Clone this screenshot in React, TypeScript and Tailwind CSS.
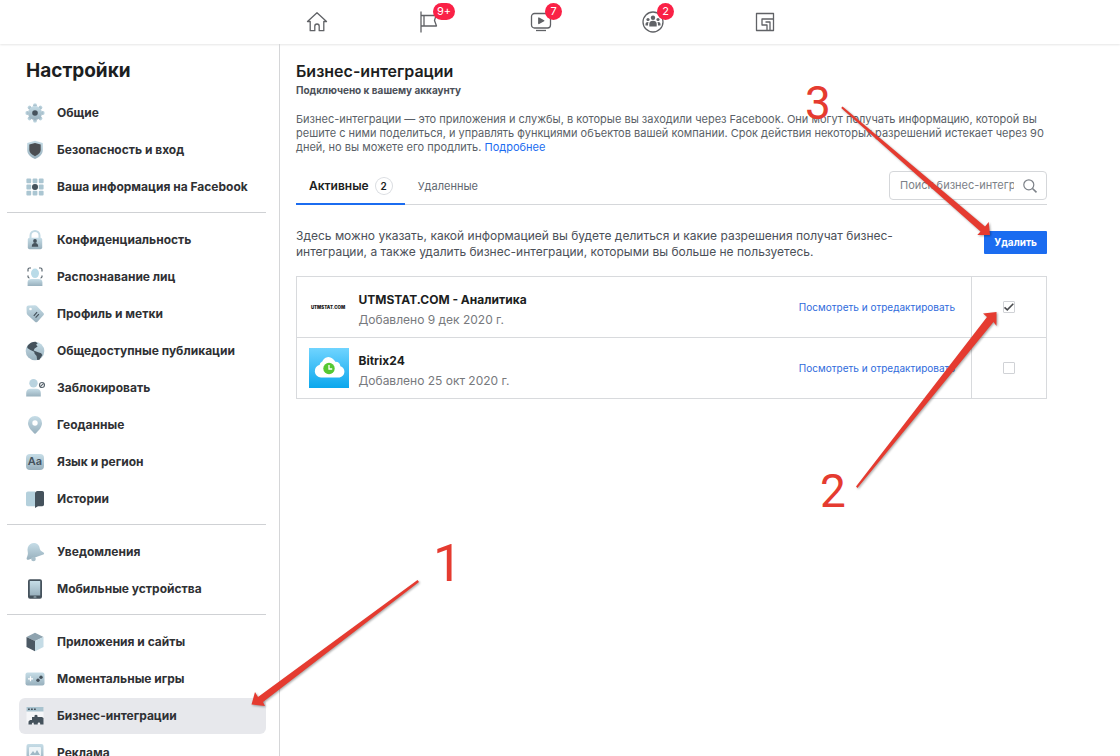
import { useState, type ReactNode } from "react";
import clsx from "clsx";

interface NavItem {
  label: string;
  icon: ReactNode;
  active?: boolean;
}

interface Integration {
  id: string;
  name: string;
  added: string;
  logo: ReactNode;
}

const SHADE = "url(#shade)";
const DARK = "#45525c";

function Glyph({ children }: { children: ReactNode }) {
  return (
    <svg width="20" height="20" viewBox="0 0 20 20" className="shrink-0" aria-hidden="true">
      {children}
    </svg>
  );
}

const GearIcon = (
  <Glyph>
    {[0, 45, 90, 135, 180, 225, 270, 315].map((a) => (
      <circle key={a} cx="10" cy="2.200" r="1.900" fill={SHADE} transform={`rotate(${a} 10 10)`} />
    ))}
    <circle cx="10" cy="10" r="7" fill={SHADE} />
    <circle cx="10" cy="10" r="2.800" fill={DARK} />
  </Glyph>
);

const ShieldIcon = (
  <Glyph>
    <path d="M10 .8 17.800 3v7c0 4.400-3.500 7.400-7.800 9-4.300-1.600-7.800-4.600-7.800-9V3z" fill={SHADE} />
    <path d="M10 3l5.700 1.600v5.200c0 3-2.600 5-5.700 6.400-3.100-1.400-5.700-3.400-5.700-6.400V4.600z" fill="#4b4e52" />
  </Glyph>
);

const GridIcon = (
  <Glyph>
    {[1.4, 7.6, 13.8].map((x) =>
      [1.4, 7.6, 13.8].map((y) => (
        <rect key={`${x}-${y}`} x={x} y={y} width="4.800" height="4.800" rx="1" fill="#abc6d2" />
      )),
    )}
    <circle cx="10" cy="10" r="3" fill={DARK} />
  </Glyph>
);

const LockIcon = (
  <Glyph>
    <path d="M5.500 9V5.500a4.500 4.500 0 0 1 9 0V9" fill="none" stroke="#c3dae4" strokeWidth="2" />
    <rect x="2.800" y="7.800" width="14.400" height="11.400" rx="1.800" fill={SHADE} />
    <circle cx="10" cy="11" r="1.900" fill={DARK} />
    <path d="M6.800 16.800c0-2.600 1-3.700 3.200-3.700s3.200 1.100 3.200 3.700z" fill={DARK} />
  </Glyph>
);

const FaceIcon = (
  <Glyph>
    <path d="M3 4.500V2.500C3 1.700 3.600 1 4.500 1H6M14 1h1.500c.9 0 1.500.7 1.500 1.500v2M3 8.500v1c0 .9.600 1.500 1.500 1.500M17 8.500v1c0 .9-.6 1.500-1.500 1.500" fill="none" stroke="#59656e" strokeWidth="1.200" />
    <ellipse cx="10" cy="6.300" rx="4" ry="4.800" fill="#b9dbe8" />
    <path d="M2.600 19v-3.500c0-2.600 1.600-3.500 4-3.500h6.800c2.400 0 4 .9 4 3.500V19z" fill={SHADE} />
  </Glyph>
);

const TagIcon = (
  <Glyph>
    <path d="M1.500 3.500c0-1.200.9-2 2-2L10 1.200c.8 0 1.300.2 1.800.7l6.600 7c.7.800.7 1.700 0 2.400l-5.900 6.400c-.7.8-1.800.8-2.500 0L2.600 11c-.6-.6-.9-1.200-.9-2z" fill={SHADE} />
    <circle cx="5.500" cy="5" r="1.300" fill="#fff" />
    <path d="M8.800 11.800l3.300-3.600M10.600 13.700l3.300-3.600" stroke={DARK} strokeWidth="1.200" />
  </Glyph>
);

const GlobeIcon = (
  <Glyph>
    <circle cx="10" cy="10" r="9.300" fill={SHADE} />
    <path d="M2.400 5C4.400 2.200 7 .9 10.500.8l2.200 1.500-1.600 1.500 1.500 1.700-3 2-.9 2 2.500 1 1.200.6 3.700 1.100 1.200 1.900-2.800 4.700-2.300.3-.6-4-2-2.300-.4-2L5.400 9 2.300 7z" fill={DARK} />
  </Glyph>
);

const BlockIcon = (
  <Glyph>
    <circle cx="8.500" cy="5.300" r="4.200" fill="#b9d3df" />
    <path d="M1.200 18.500V15c0-3 2-4.300 4.300-4.300h6c2.300 0 4.300 1.300 4.300 4.300v3.500z" fill={SHADE} />
    <circle cx="17" cy="7" r="2.500" fill="none" stroke="#59656e" strokeWidth="1.200" />
    <path d="M18.700 5.300l-3.400 3.400" stroke="#59656e" strokeWidth="1.100" />
  </Glyph>
);

const PinIcon = (
  <Glyph>
    <path d="M10 19C6 15.500 3 11.900 3 8a7 7 0 0 1 14 0c0 3.900-3 7.500-7 11z" fill={SHADE} />
    <circle cx="10" cy="8" r="2.700" fill="#fff" />
  </Glyph>
);

const LanguageIcon = (
  <Glyph>
    <rect x="1" y="2" width="18" height="16" rx="4" fill={SHADE} />
    <text x="10" y="13" textAnchor="middle" fontSize="11" fontWeight="600" fill={DARK}>
      Aa
    </text>
  </Glyph>
);

const BookIcon = (
  <Glyph>
    <path d="M10 2.500H3C1.800 2.500 1 3.300 1 4.500v11c0 1 .7 1.700 1.800 1.700H10z" fill="#b4d0dc" />
    <path d="M10 19V4.500C10 3 11 2 12.500 2h4.700c1.100 0 1.800.7 1.800 1.800v11.700c0 1-.7 1.700-1.800 1.700H13L10 19z" fill={DARK} />
  </Glyph>
);

const BellIcon = (
  <Glyph>
    <path d="M2.800 5.500C3.600 2.500 7 .5 10 1.100c3.700.8 4.500 3.800 4.900 6 .4 1.800 2 2.500 3.600 3.300.9.500.8 1.700-.2 2.100L3.500 17.700c-1.200.4-2.200-.4-1.800-1.700.7-2.200 1.500-3.700 1.100-5.800-.4-1.700-.4-3.200 0-4.700z" fill={SHADE} />
    <circle cx="8.500" cy="17" r="2.300" fill="#a9bfca" />
  </Glyph>
);

const PhoneIcon = (
  <Glyph>
    <rect x="3" y=".3" width="14" height="19.400" rx="2" fill={DARK} />
    <rect x="4.800" y="2" width="10.400" height="14.500" fill={SHADE} />
    <rect x="8.500" y="17.400" width="3" height="1.200" rx=".5" fill="#a9bfca" />
  </Glyph>
);

const CubeIcon = (
  <Glyph>
    <path d="M10 .8 18.500 5 10 9 1.500 5z" fill="#8ea3af" />
    <path d="M1.500 5 10 9v10.200L1.500 15z" fill="#4b5964" />
    <path d="M18.500 5 10 9v10.200l8.500-4.200z" fill="#c5dce6" />
  </Glyph>
);

const GamepadIcon = (
  <Glyph>
    <rect x=".5" y="3.500" width="19" height="13" rx="2" fill={SHADE} />
    <path d="M5.500 7.300v5M3 9.800h5" stroke="#fff" strokeWidth="1.200" />
    <circle cx="16" cy="8.300" r="1.700" fill={DARK} />
    <circle cx="13" cy="11.300" r="1.700" fill={DARK} />
  </Glyph>
);

const PuzzleIcon = (
  <Glyph>
    <rect x="1.500" y="1" width="17" height="16.500" rx="1" fill="#f5f6f8" />
    <rect x="1.500" y="1" width="17" height="4.500" fill="#a9c3cf" />
    <path d="M3 3.200h1.800M6 3.200h1.800M9 3.200h1.800" stroke={DARK} strokeWidth="1.600" />
    <path d="M7 11h2.500c-.8-3 3.800-3 3 0H17l1.500 1v6.500h-3.300c.4-2.600-2.900-2.600-2.500 0H9l-.6-2c-1.200.2-1.600.8-1.500 2H3.500v-2.800c.3-1.300 1.700-1.900 3.500-1.700z" fill={DARK} />
  </Glyph>
);

const AdsIcon = (
  <Glyph>
    <rect x="1.500" y="1" width="17" height="18" rx="2" fill={SHADE} />
    <rect x="4" y="4" width="12" height="9" rx="1" fill="#eef5f8" />
    <path d="M5 12l3-4 2 2.500L12 7l3 5z" fill="#9fb9c6" />
  </Glyph>
);

const navGroups: NavItem[][] = [
  [
    { label: "Общие", icon: GearIcon },
    { label: "Безопасность и вход", icon: ShieldIcon },
    { label: "Ваша информация на Facebook", icon: GridIcon },
  ],
  [
    { label: "Конфиденциальность", icon: LockIcon },
    { label: "Распознавание лиц", icon: FaceIcon },
    { label: "Профиль и метки", icon: TagIcon },
    { label: "Общедоступные публикации", icon: GlobeIcon },
    { label: "Заблокировать", icon: BlockIcon },
    { label: "Геоданные", icon: PinIcon },
    { label: "Язык и регион", icon: LanguageIcon },
    { label: "Истории", icon: BookIcon },
  ],
  [
    { label: "Уведомления", icon: BellIcon },
    { label: "Мобильные устройства", icon: PhoneIcon },
  ],
  [
    { label: "Приложения и сайты", icon: CubeIcon },
    { label: "Моментальные игры", icon: GamepadIcon },
    { label: "Бизнес-интеграции", icon: PuzzleIcon, active: true },
    { label: "Реклама", icon: AdsIcon },
  ],
];

const integrations: Integration[] = [
  {
    id: "utmstat",
    name: "UTMSTAT.COM - Аналитика",
    added: "Добавлено 9 дек 2020 г.",
    logo: (
      <svg width="40" height="40" viewBox="0 0 40 40" aria-hidden="true">
        <text x="19" y="22" textAnchor="middle" fontSize="4.400" fontWeight="900" fill="#222">
          UTMSTAT.COM
        </text>
      </svg>
    ),
  },
  {
    id: "bitrix24",
    name: "Bitrix24",
    added: "Добавлено 25 окт 2020 г.",
    logo: <BitrixLogo />,
  },
];

function BitrixLogo() {
  return (
    <svg width="40" height="40" viewBox="0 0 40 40" aria-hidden="true">
      <defs>
        <linearGradient id="sky" x1="0" y1="0" x2="0" y2="1">
          <stop offset="0" stopColor="#70d4ff" />
          <stop offset="1" stopColor="#0ba7ed" />
        </linearGradient>
      </defs>
      <rect width="40" height="40" fill="url(#sky)" />
      <path d="M12 29.500a6.500 6.500 0 0 1-1.300-12.800c.4-1.700 1.300-3 2.600-3.300a6.600 6.600 0 0 1 11-2.200c1 .9 1.500 1.500 1.900 2.500 3.200-.2 5 1.800 5.200 4.600 2.500.8 4 2.700 4 5.200 0 3.500-2.500 6-6 6z" fill="#fff" />
      <circle cx="20" cy="20.500" r="5.700" fill="#56c833" />
      <path d="M20 17v4h3.200" fill="none" stroke="#fff" strokeWidth="1.300" />
    </svg>
  );
}

function Badge({ children }: { children: ReactNode }) {
  return (
    <span className="absolute -top-2 left-[15px] flex h-[17px] min-w-[17px] items-center justify-center rounded-full bg-[#fa2146] px-1 text-[11px] text-white">
      {children}
    </span>
  );
}

const topTabs = [
  {
    title: "Главная",
    icon: <path d="M1.500 10.500 11 1.800l9.500 8.700h-2.700v9.200h-4.600v-4.500a2.200 2.200 0 0 0-4.400 0v4.500H4.200v-9.200z" />,
  },
  {
    title: "Страницы",
    badge: "9+",
    icon: <path d="M3 .5v21M6 4v11M3 4.500h15l-1.500 5 2 5.500H3" />,
  },
  {
    title: "Видео",
    badge: "7",
    icon: (
      <>
        <rect x="1.500" y="2.500" width="19" height="14.500" rx="3" />
        <path d="M8.800 7v5.500l5-2.750z" fill="currentColor" />
        <path d="M6 19.500h10" />
      </>
    ),
  },
  {
    title: "Группы",
    badge: "2",
    icon: (
      <>
        <circle cx="11" cy="11" r="10" />
        <g fill="currentColor" stroke="none">
          <circle cx="11" cy="6.700" r="2.200" />
          <circle cx="6" cy="8.500" r="1.600" />
          <circle cx="16" cy="8.500" r="1.600" />
          <path d="M7.300 15.500v-2.700c0-2 1.500-3 3.700-3s3.700 1 3.700 3v2.700zM3.500 14.500v-1.300c0-1.500 1.200-2.400 3-2.200-.4.800-.5 2-.5 3.500zM18.500 14.500v-1.300c0-1.500-1.200-2.400-3-2.200.4.800.5 2 .5 3.500z" />
        </g>
      </>
    ),
  },
  {
    title: "Игры",
    icon: <path d="M2.500 2.500h17v17h-17zM19.500 8H8v6h5v5.500M16 19.500V11h-4.500" />,
  },
];

function TopBar() {
  return (
    <header className="flex h-11 shrink-0 justify-start pl-[261px] shadow-[0_1px_2px_rgba(0,0,0,0.1)]">
      <nav className="flex">
        {topTabs.map((tab) => (
          <a key={tab.title} href="#" title={tab.title} className="flex w-28 items-center justify-center">
            <span className="relative text-[#606266]">
              <svg width="22" height="22" viewBox="0 0 22 22" fill="none" stroke="currentColor" strokeWidth="1.300" strokeLinejoin="round">
                {tab.icon}
              </svg>
              {tab.badge && <Badge>{tab.badge}</Badge>}
            </span>
          </a>
        ))}
      </nav>
    </header>
  );
}

function Sidebar() {
  return (
    <aside className="w-[280px] shrink-0 overflow-hidden border-r border-[#d5d6d8] pt-3 pr-[13px]">
      <svg width="0" height="0" className="absolute" aria-hidden="true">
        <defs>
          <linearGradient id="shade" x1="0" y1="0" x2="0" y2="1">
            <stop offset="0" stopColor="#c6dde7" />
            <stop offset="1" stopColor="#98b0bd" />
          </linearGradient>
        </defs>
      </svg>
      <h1 className="pt-px pb-2.5 pl-[26px] text-[19px] leading-7 font-bold text-[#1c1e21]">Настройки</h1>
      {navGroups.map((group, i) => (
        <div key={i}>
          {i > 0 && <hr className="mt-1.5 mb-[9px] ml-[7px] border-[#cfd1d4]" />}
          <ul className="ml-[19px]">
            {group.map((item) => (
              <li key={item.label} className="pb-px">
                <a
                  href="#"
                  className={clsx(
                    "flex h-9 items-center gap-3 rounded-md pl-1.5 text-[12px] font-bold whitespace-nowrap text-[#2f3134]",
                    item.active && "bg-[#e7e8ec]",
                  )}
                >
                  {item.icon}
                  {item.label}
                </a>
              </li>
            ))}
          </ul>
        </div>
      ))}
    </aside>
  );
}

function Toolbar() {
  return (
    <div className="mt-[11px] flex h-10 items-start justify-between border-b border-[#d5d7da]">
      <div className="flex h-10">
        <button className="flex items-center gap-[7px] border-b-2 border-[#1b6cf0] px-[13px] pt-1 text-[12px] font-semibold text-[#1c1e21]">
          Активные
          <span className="flex h-4 w-4 items-center justify-center rounded-full text-[10px] ring-1 ring-[#dadde1]">
            2
          </span>
        </button>
        <button className="border-b-2 border-transparent px-[13px] pt-1 text-[11px] text-[#606770]">Удаленные</button>
      </div>
      <label className="mt-1.5 flex h-[29px] w-[158px] items-center rounded-sm border border-[#d5d7da] pr-2 pl-2.5">
        <input
          type="text"
          aria-label="Поиск бизнес-интеграций"
          placeholder="Поиск бизнес-интеграций"
          className="w-[114px] text-[11px] outline-none placeholder:text-[#7c8188]"
        />
        <svg width="16" height="16" viewBox="0 0 16 16" fill="none" stroke="#7c8188" strokeWidth="1.200" className="ml-auto shrink-0" aria-hidden="true">
          <circle cx="6.800" cy="6.800" r="5" />
          <path d="M10.500 10.500l4 3.800" strokeWidth="1.600" />
        </svg>
      </label>
    </div>
  );
}

function IntegrationTable() {
  const [checked, setChecked] = useState<Record<string, boolean>>({ utmstat: true });

  return (
    <table className="mt-4 w-full border-collapse border border-[#d8dadd]">
      <tbody>
        {integrations.map((item) => (
          <tr key={item.id} className="h-[61px] border-b border-[#d8dadd]">
            <td className="w-[62px] pl-3">{item.logo}</td>
            <td className="pt-1.5">
              <div className="text-[12px] leading-5 font-bold text-[#1c1e21]">{item.name}</div>
              <div className="text-[12px] leading-5 text-[#77797d]">{item.added}</div>
            </td>
            <td className="pr-4 text-right text-[10px]">
              <a href="#" className="text-[#2f6bdc]">
                Посмотреть и отредактировать
              </a>
            </td>
            <td className="w-[75px] border-l border-[#d8dadd]">
              <label className="relative mx-auto block h-3 w-3">
                <input
                  type="checkbox"
                  aria-label={item.name}
                  checked={!!checked[item.id]}
                  onChange={(e) => setChecked({ ...checked, [item.id]: e.target.checked })}
                  className="block h-3 w-3 appearance-none rounded-[1px] border border-[#d0d2d6]"
                />
                {checked[item.id] && (
                  <svg width="12" height="12" viewBox="0 0 12 12" className="pointer-events-none absolute inset-0" aria-hidden="true">
                    <path d="M1.500 6.300l2.800 2.500 6-6" fill="none" stroke="#4b4d50" strokeWidth="1.600" />
                  </svg>
                )}
              </label>
            </td>
          </tr>
        ))}
      </tbody>
    </table>
  );
}

// Numbered arrows drawn over the page.
function Arrows() {
  return (
    <svg
      width="1120"
      height="756"
      viewBox="0 0 1120 756"
      className="pointer-events-none absolute top-0 left-0 drop-shadow-[1px_1px_1px_rgba(0,0,0,0.35)]"
      fill="#e53b30"
    >
      <path d="M251.500 704.500 255 692l3 5 159.500-117 1.500 2-156 120 2 4z" />
      <path d="M996.500 312 983 313.500l4 3.500-131 169.500 1.500 1.500L993.500 322l3 4z" />
      <path d="M990 235l-1.300-13-3.700 4.500L842.500 106.500l-1.300 1.500 139.300 123.500-3.200 3.500z" />
    </svg>
  );
}

function StepNumbers() {
  return (
    <div className="pointer-events-none font-[Roboto,sans-serif] leading-none text-[#e53b30]">
      <span className="absolute top-[538px] left-[433px] text-[52px]">1</span>
      <span className="absolute top-[468px] left-[820px] text-[46px]">2</span>
      <span className="absolute top-[80px] left-[805px] text-[46px]">3</span>
    </div>
  );
}

export default function App() {
  return (
    <div className="relative flex h-screen flex-col overflow-hidden bg-white font-[Inter,sans-serif]">
      <TopBar />
      <div className="flex min-h-0 flex-1">
        <Sidebar />
        <main className="max-w-[767px] min-w-0 flex-1 pt-[17px] pl-4">
          <h2 className="text-[16px] leading-5 font-semibold text-[#1c1e21]">Бизнес-интеграции</h2>
          <p className="mt-px text-[10px] leading-4 font-bold text-[#4b5058]">Подключено к вашему аккаунту</p>
          <p className="mt-[14px] text-[11px] leading-[14px] text-[#5a5f67]">
            Бизнес-интеграции — это приложения и службы, в которые вы заходили через Facebook. Они могут получать
            информацию, которой вы решите с ними поделиться, и управлять функциями объектов вашей компании. Срок
            действия некоторых разрешений истекает через 90 дней, но вы можете его продлить.{" "}
            <a href="#" className="text-[#1b6cf0]">
              Подробнее
            </a>
          </p>
          <Toolbar />
          <div className="mt-[23px] flex items-start justify-between">
            <p className="max-w-[620px] text-[12px] leading-4 text-[#4b5058]">
              Здесь можно указать, какой информацией вы будете делиться и какие разрешения получат бизнес-интеграции, а
              также удалить бизнес-интеграции, которыми вы больше не пользуетесь.
            </p>
            <button className="mt-[3px] h-[23px] rounded-[1px] bg-[#1b6cf0] px-2.5 text-[10px] font-bold text-white">
              Удалить
            </button>
          </div>
          <IntegrationTable />
        </main>
      </div>
      <Arrows />
      <StepNumbers />
    </div>
  );
}
